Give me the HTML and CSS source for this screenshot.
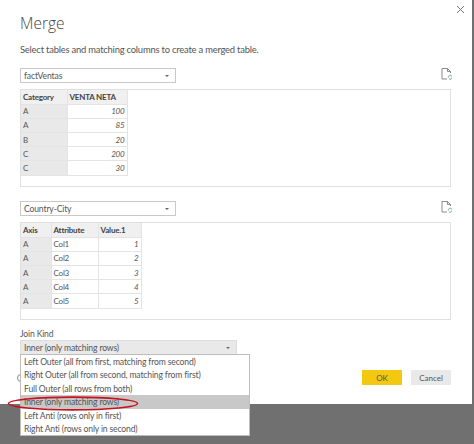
FILE: index.html
```html
<!DOCTYPE html>
<html lang="en">
<head>
<meta charset="utf-8">
<title>Merge</title>
<link rel="stylesheet" href="styles.css">
</head>
<body>
<main class="dialog">
  <svg class="close" viewBox="0 0 9 9" width="9" height="9"><path d="M1 1l7 7M8 1l-7 7" stroke="#777" stroke-width="1" fill="none"/></svg>
  <h1 class="title">Merge</h1>
  <p class="intro">Select tables and matching columns to create a merged table.</p>

  <section class="picker first">
    <div class="row-head">
      <div class="select"><span>factVentas</span><i class="caret"></i></div>
      <svg class="refresh" viewBox="0 0 11 12" width="11" height="12"><path d="M1 .5h5.5l3 3V5M1 .5v10.5h5" stroke="#8a8a8a" fill="none"/><path d="M6.5.5v3h3" stroke="#8a8a8a" fill="none"/><path d="M7.3 9.5a2 2 0 1 1 .7 1.3" stroke="#5fa98c" fill="none"/></svg>
    </div>
    <div class="preview">
      <table class="grid">
        <thead><tr><th class="c-a">Category</th><th class="c-b">VENTA NETA</th></tr></thead>
        <tbody>
          <tr><td class="key">A</td><td class="num">100</td></tr>
          <tr><td class="key">A</td><td class="num">85</td></tr>
          <tr><td class="key">B</td><td class="num">20</td></tr>
          <tr><td class="key">C</td><td class="num">200</td></tr>
          <tr><td class="key">C</td><td class="num">30</td></tr>
        </tbody>
      </table>
    </div>
  </section>

  <section class="picker second">
    <div class="row-head">
      <div class="select"><span>Country-City</span><i class="caret"></i></div>
      <svg class="refresh" viewBox="0 0 11 12" width="11" height="12"><path d="M1 .5h5.5l3 3V5M1 .5v10.5h5" stroke="#8a8a8a" fill="none"/><path d="M6.5.5v3h3" stroke="#8a8a8a" fill="none"/><path d="M7.3 9.5a2 2 0 1 1 .7 1.3" stroke="#5fa98c" fill="none"/></svg>
    </div>
    <div class="preview">
      <table class="grid">
        <thead><tr><th class="c-c">Axis</th><th class="c-d">Attribute</th><th class="c-e">Value.1</th></tr></thead>
        <tbody>
          <tr><td class="key">A</td><td>Col1</td><td class="num">1</td></tr>
          <tr><td class="key">A</td><td>Col2</td><td class="num">2</td></tr>
          <tr><td class="key">A</td><td>Col3</td><td class="num">3</td></tr>
          <tr><td class="key">A</td><td>Col4</td><td class="num">4</td></tr>
          <tr><td class="key">A</td><td>Col5</td><td class="num">5</td></tr>
        </tbody>
      </table>
    </div>
  </section>

  <div class="join">
    <label class="join-label">Join Kind</label>
    <div class="select wide"><span>Inner (only matching rows)</span><i class="caret"></i></div>
    <div class="footer">
      <span class="peek"></span>
      <button class="btn ok">OK</button>
      <button class="btn cancel">Cancel</button>
    </div>
    <ul class="menu">
      <li>Left Outer (all from first, matching from second)</li>
      <li>Right Outer (all from second, matching from first)</li>
      <li>Full Outer (all rows from both)</li>
      <li class="active">Inner (only matching rows)</li>
      <li>Left Anti (rows only in first)</li>
      <li>Right Anti (rows only in second)</li>
    </ul>
    <svg class="ring" viewBox="0 0 132 15" width="132" height="15"><ellipse cx="66" cy="7.5" rx="64.5" ry="6.4" fill="none" stroke="#c8121f" stroke-width="1.6"/></svg>
  </div>
</main>
</body>
</html>
```
FILE: styles.css
```css
html, body { margin: 0; padding: 0; }
body {
  width: 474px;
  height: 444px;
  overflow: hidden;
  background: #707070;
  font-family: "Lato", "Open Sans", sans-serif;
  font-size: 8.6px;
  letter-spacing: -0.15px;
  color: #555;
}
.dialog {
  position: relative;
  box-sizing: border-box;
  width: 472px;
  height: 404px;
  padding: 14px 21px 0 20px;
  background: #fff;
}
.close { position: absolute; top: 5px; right: 7px; }
.title {
  margin: 0;
  font-family: "Open Sans", sans-serif;
  font-size: 15.5px;
  line-height: 19px;
  font-weight: 300;
  letter-spacing: 0;
  color: #444;
}
.intro {
  margin: 9px 0 0;
  font-size: 9.4px;
  letter-spacing: -0.2px;
  line-height: 16px;
  color: #555;
}
.picker.first { margin-top: 10px; }
.picker.second { margin-top: 14px; }
.row-head {
  display: flex;
  align-items: center;
  justify-content: space-between;
  height: 15px;
}
.select {
  box-sizing: border-box;
  display: flex;
  align-items: center;
  justify-content: space-between;
  width: 156px;
  height: 15px;
  padding: 1px 6px 0 3px;
  border: 1px solid #c9c9c9;
  background: #fff;
  font-size: 8.6px;
}
.select.wide {
  width: 217px;
  background: #e9e9e9;
  border-color: #dedede;
}
.caret {
  width: 0;
  height: 0;
  border: 2px solid transparent;
  border-top: 2.5px solid #666;
  border-bottom: 0;
}
.refresh { margin: -3px -1px 0 0; }
.preview {
  box-sizing: border-box;
  height: 98px;
  margin-top: 6px;
  border: 1px solid #e0e0e0;
}
.grid {
  border-collapse: collapse;
  table-layout: fixed;
  font-size: 8px;
  letter-spacing: -0.2px;
}
.grid th, .grid td {
  box-sizing: border-box;
  height: 14.2px;
  padding: 0 2px;
  border: 1px solid #e4e4e4;
  white-space: nowrap;
  overflow: hidden;
}
.grid tr > :first-child { border-left: 0; }
.grid thead tr > * { border-top: 0; }
.grid th {
  background: #f0f0f0;
  font-weight: 700;
  text-align: left;
  color: #444;
}
.grid td.key { background: #e9e9e9; }
.grid td.num { text-align: right; font-style: italic; }
.c-a { width: 46px; }
.c-b { width: 60px; }
.c-c { width: 30px; }
.c-d { width: 47px; }
.c-e { width: 43px; }
.join { position: relative; margin-top: 9px; }
.join-label { display: block; height: 11px; line-height: 11px; }
.footer {
  display: flex;
  align-items: center;
  justify-content: flex-end;
  gap: 9px;
  margin-top: 15px;
}
.peek {
  margin-right: auto;
  margin-left: -3px;
  width: 6px;
  height: 6px;
  border: 1px solid #888;
  border-radius: 50%;
}
.btn {
  width: 40px;
  height: 15px;
  padding: 0;
  border: 0;
  font: inherit;
  font-size: 8px;
  color: #555;
}
.ok { background: #f2c811; }
.cancel { background: #e9e9e9; }
.menu {
  position: absolute;
  top: 25px;
  left: 0;
  width: 230px;
  box-sizing: border-box;
  margin: 0;
  padding: 0;
  list-style: none;
  background: #fff;
  border: 1px solid #bdbdbd;
}
.menu li {
  height: 13.4px;
  padding-left: 3px;
  line-height: 15px;
  white-space: nowrap;
}
.menu li.active { background: #c8c8c8; }
.ring { position: absolute; top: 67px; left: -13px; }
```
